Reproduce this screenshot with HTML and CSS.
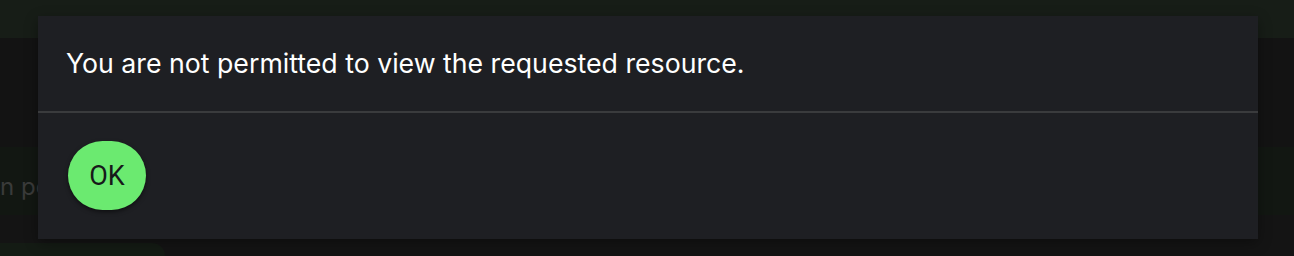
FILE: index.html
```html
<!DOCTYPE html>
<html lang="en">
<head>
<meta charset="utf-8">
<title>Not permitted</title>
<link rel="stylesheet" href="styles.css">
</head>
<body>
<div class="page">
  <div class="topbar"></div>
  <div class="content">
    <div class="row-spacer"></div>
    <div class="notice-row"><span class="notice-text">n pe</span></div>
    <div class="row-spacer2"></div>
    <div class="bottom-card"></div>
  </div>
</div>
<div class="dialog" role="dialog">
  <div class="dialog-body">You are not permitted to view the requested resource.</div>
  <div class="dialog-divider"></div>
  <div class="dialog-actions">
    <button class="btn-ok">OK</button>
  </div>
</div>
</body>
</html>
```

FILE: styles.css
```css
html, body {
  margin: 0;
  padding: 0;
  width: 1294px;
  height: 256px;
  overflow: hidden;
  background: #141414;
}
.page {
  display: flex;
  flex-direction: column;
  height: 256px;
}
.page > *, .content > * {
  flex-shrink: 0;
}
.topbar {
  height: 38px;
  background: #171d17;
}
.content {
  flex: 1;
  display: flex;
  flex-direction: column;
  background: #141414;
}
.row-spacer {
  height: 109px;
  background: #131313;
}
.notice-row {
  height: 68px;
  background: #121712;
  display: flex;
  align-items: center;
  overflow: hidden;
  white-space: nowrap;
}
.notice-text {
  font-family: "Inter", "Noto Sans", sans-serif;
  font-size: 24px;
  color: #3a3b3a;
  padding-top: 10px;
}
.row-spacer2 {
  height: 28px;
  background: #141414;
}
.bottom-card {
  width: 165px;
  height: 13px;
  background: #141b14;
  border-top-right-radius: 22px;
}
.dialog {
  position: absolute;
  left: 38px;
  top: 16px;
  width: 1220px;
  background: #1e1f23;
  box-shadow: 0 4px 12px rgba(0, 0, 0, 0.35);
  display: flex;
  flex-direction: column;
}
.dialog-body {
  padding: 28px 28px;
  height: 39px;
  line-height: 39px;
  font-family: "Inter", "Noto Sans", sans-serif;
  font-size: 26.7px;
  color: #ffffff;
}
.dialog-divider {
  height: 2px;
  background: #3a3b3d;
}
.dialog-actions {
  padding: 28px 30px 29px;
  display: flex;
}
.btn-ok {
  width: 78px;
  height: 69px;
  border: none;
  border-radius: 999px;
  background: #6bea70;
  color: #17191a;
  font-family: "Roboto", "Noto Sans", sans-serif;
  font-size: 27px;
  box-shadow: 0 2px 4px rgba(0, 0, 0, 0.5);
  padding: 0;
}
```
